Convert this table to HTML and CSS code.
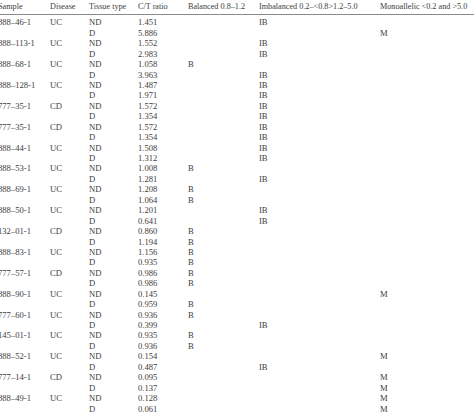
FILE: index.html
```html
<!DOCTYPE html>
<html>
<head>
<meta charset="utf-8">
<link rel="stylesheet" href="styles.css">
</head>
<body>
<table class="data">
<colgroup>
<col class="c-sample"><col class="c-disease"><col class="c-tissue"><col class="c-ratio"><col class="c-bal"><col class="c-imb"><col class="c-mono">
</colgroup>
<thead>
<tr><th>Sample</th><th>Disease</th><th>Tissue type</th><th>C/T ratio</th><th>Balanced 0.8–1.2</th><th>Imbalanced 0.2–&lt;0.8&gt;1.2–5.0</th><th>Monoallelic &lt;0.2 and &gt;5.0</th></tr>
</thead>
<tbody>
<tr class="first"><td>888–46-1</td><td>UC</td><td>ND</td><td>1.451</td><td></td><td>IB</td><td></td></tr>
<tr><td></td><td></td><td>D</td><td>5.886</td><td></td><td></td><td>M</td></tr>
<tr><td>888–113-1</td><td>UC</td><td>ND</td><td>1.552</td><td></td><td>IB</td><td></td></tr>
<tr><td></td><td></td><td>D</td><td>2.983</td><td></td><td>IB</td><td></td></tr>
<tr><td>888–68-1</td><td>UC</td><td>ND</td><td>1.058</td><td>B</td><td></td><td></td></tr>
<tr><td></td><td></td><td>D</td><td>3.963</td><td></td><td>IB</td><td></td></tr>
<tr><td>888–128-1</td><td>UC</td><td>ND</td><td>1.487</td><td></td><td>IB</td><td></td></tr>
<tr><td></td><td></td><td>D</td><td>1.971</td><td></td><td>IB</td><td></td></tr>
<tr><td>777–35-1</td><td>CD</td><td>ND</td><td>1.572</td><td></td><td>IB</td><td></td></tr>
<tr><td></td><td></td><td>D</td><td>1.354</td><td></td><td>IB</td><td></td></tr>
<tr><td>777–35-1</td><td>CD</td><td>ND</td><td>1.572</td><td></td><td>IB</td><td></td></tr>
<tr><td></td><td></td><td>D</td><td>1.354</td><td></td><td>IB</td><td></td></tr>
<tr><td>888–44-1</td><td>UC</td><td>ND</td><td>1.508</td><td></td><td>IB</td><td></td></tr>
<tr><td></td><td></td><td>D</td><td>1.312</td><td></td><td>IB</td><td></td></tr>
<tr><td>888–53-1</td><td>UC</td><td>ND</td><td>1.008</td><td>B</td><td></td><td></td></tr>
<tr><td></td><td></td><td>D</td><td>1.281</td><td></td><td>IB</td><td></td></tr>
<tr><td>888–69-1</td><td>UC</td><td>ND</td><td>1.208</td><td>B</td><td></td><td></td></tr>
<tr><td></td><td></td><td>D</td><td>1.064</td><td>B</td><td></td><td></td></tr>
<tr><td>888–50-1</td><td>UC</td><td>ND</td><td>1.201</td><td></td><td>IB</td><td></td></tr>
<tr><td></td><td></td><td>D</td><td>0.641</td><td></td><td>IB</td><td></td></tr>
<tr><td>132–01-1</td><td>CD</td><td>ND</td><td>0.860</td><td>B</td><td></td><td></td></tr>
<tr><td></td><td></td><td>D</td><td>1.194</td><td>B</td><td></td><td></td></tr>
<tr><td>888–83-1</td><td>UC</td><td>ND</td><td>1.156</td><td>B</td><td></td><td></td></tr>
<tr><td></td><td></td><td>D</td><td>0.935</td><td>B</td><td></td><td></td></tr>
<tr><td>777–57-1</td><td>CD</td><td>ND</td><td>0.986</td><td>B</td><td></td><td></td></tr>
<tr><td></td><td></td><td>D</td><td>0.986</td><td>B</td><td></td><td></td></tr>
<tr><td>888–90-1</td><td>UC</td><td>ND</td><td>0.145</td><td></td><td></td><td>M</td></tr>
<tr><td></td><td></td><td>D</td><td>0.959</td><td>B</td><td></td><td></td></tr>
<tr><td>777–60-1</td><td>UC</td><td>ND</td><td>0.936</td><td>B</td><td></td><td></td></tr>
<tr><td></td><td></td><td>D</td><td>0.399</td><td></td><td>IB</td><td></td></tr>
<tr><td>145–01-1</td><td>UC</td><td>ND</td><td>0.935</td><td>B</td><td></td><td></td></tr>
<tr><td></td><td></td><td>D</td><td>0.936</td><td>B</td><td></td><td></td></tr>
<tr><td>888–52-1</td><td>UC</td><td>ND</td><td>0.154</td><td></td><td></td><td>M</td></tr>
<tr><td></td><td></td><td>D</td><td>0.487</td><td></td><td>IB</td><td></td></tr>
<tr><td>777–14-1</td><td>CD</td><td>ND</td><td>0.095</td><td></td><td></td><td>M</td></tr>
<tr><td></td><td></td><td>D</td><td>0.137</td><td></td><td></td><td>M</td></tr>
<tr><td>888–49-1</td><td>UC</td><td>ND</td><td>0.128</td><td></td><td></td><td>M</td></tr>
<tr><td></td><td></td><td>D</td><td>0.061</td><td></td><td></td><td>M</td></tr>
</tbody>
</table>
</body>
</html>
```
FILE: styles.css
```css
html, body {
  margin: 0;
  padding: 0;
  background: #ffffff;
  overflow: hidden;
}
body {
  width: 474px;
  height: 414px;
}
.data {
  border-collapse: collapse;
  table-layout: fixed;
  width: 600px;
  margin: 2px 0 0 -2px;
  font-family: "Liberation Serif", "Times New Roman", serif;
  font-size: 8.6px;
  color: #3c3c3c;
  white-space: nowrap;
}
.c-sample { width: 52px; }
.c-disease { width: 39px; }
.c-tissue { width: 49px; }
.c-ratio { width: 50px; }
.c-bal { width: 71px; }
.c-imb { width: 121px; }
.c-mono { width: 218px; }
.data th, .data td {
  padding: 0;
  text-align: left;
  font-weight: normal;
  height: 10.43px;
  line-height: 10.43px;
  overflow: hidden;
}
.data th {
  font-size: 8.2px;
  padding-bottom: 1.5px;
  border-bottom: 1.5px solid #8a8a8a;
}
.data tr.first td {
  padding-top: 2.4px;
}
```
